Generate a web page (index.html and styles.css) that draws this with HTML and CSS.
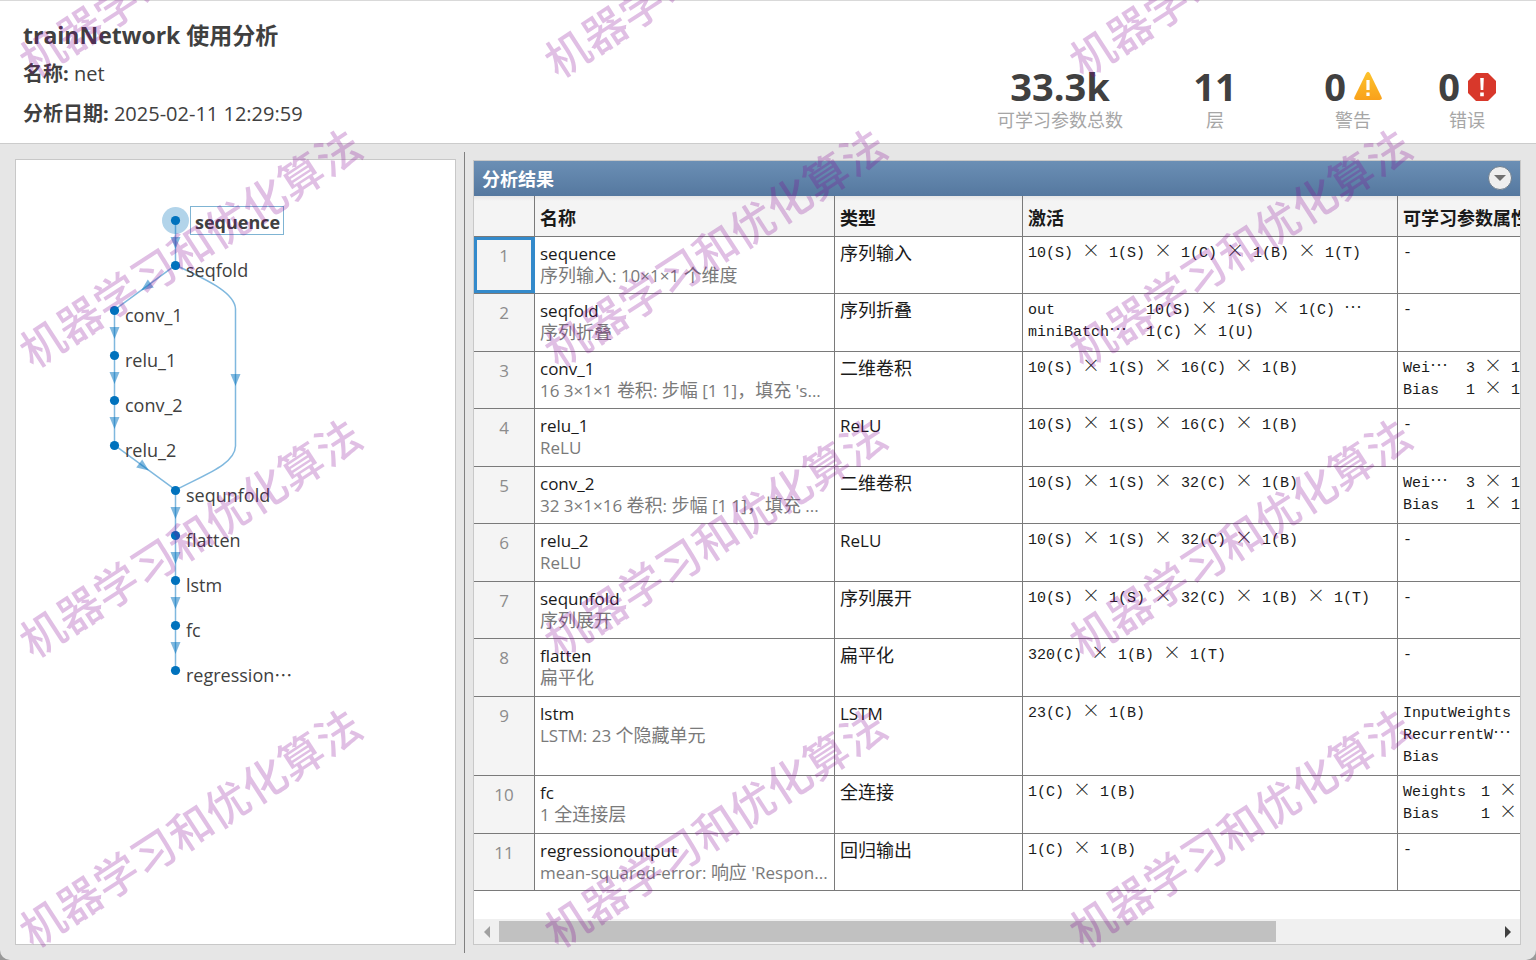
FILE: index.html
```html
<!DOCTYPE html>
<html lang="zh-CN">
<head>
    <meta charset="UTF-8">
    <meta name="viewport" content="width=device-width, initial-scale=1.0">
    <title>trainNetwork 使用分析</title>
    <link rel="stylesheet" href="styles.css">
</head>
<body>
    <div class="app">
        <header class="header">
            <div class="info">
                <h1>trainNetwork 使用分析</h1>
                <p><b>名称:</b> net</p>
                <p><b>分析日期:</b> 2025-02-11 12:29:59</p>
            </div>
            <div class="stats">
                <div class="stat total">
                    <strong>33.3k</strong>
                    <span>可学习参数总数</span>
                </div>
                <div class="stat layers">
                    <strong>11</strong>
                    <span>层</span>
                </div>
                <div class="stat">
                    <strong>0
                        <svg width="28" height="30" viewBox="0 0 28 30">
                            <defs>
                                <linearGradient id="warn" x1="0" y1="0" x2="0" y2="1">
                                    <stop offset="0" stop-color="#fcc32c"/>
                                    <stop offset="1" stop-color="#f9a11b"/>
                                </linearGradient>
                            </defs>
                            <path d="M12 2.5Q14 -1 16 2.5L27.5 26Q28.5 29 25.5 29H2.5Q-.5 29 .5 26Z" fill="url(#warn)"/>
                            <path d="M12.4 9h3.2v10h-3.2zM12.4 21.5h3.2v3.5h-3.2z" fill="#fff"/>
                        </svg>
                    </strong>
                    <span>警告</span>
                </div>
                <div class="stat">
                    <strong>0
                        <svg width="28" height="30" viewBox="0 0 28 30">
                            <path d="M8 2H20L28 10V22L20 30H8L0 22V10Z" fill="#d8382b"/>
                            <path d="M12.2 7h3.6l-.5 12h-2.6zM12.2 21.5h3.6v3.8h-3.6z" fill="#fff"/>
                        </svg>
                    </strong>
                    <span>错误</span>
                </div>
            </div>
        </header>

        <main class="main">
            <section class="graph">
                <svg width="439" height="540" viewBox="0 0 439 540">
                    <defs>
                        <path id="arrow" d="M-5 -6H5L0 6Z"/>
                        <circle id="node" r="4.6"/>
                    </defs>
                    <circle class="halo" cx="159.500" cy="60.500" r="13.5"/>
                    <g class="edges">
                        <path d="M159.500 60V105L98.500 150V285L159.500 330V510"/>
                        <path d="M159.500 105C184 117 219 131 219.500 149V286C219 304 190 314 159.500 330"/>
                    </g>
                    <g class="arrows">
                        <use href="#arrow" x="159.500" y="83"/>
                        <use href="#arrow" transform="translate(130 127) rotate(53)"/>
                        <use href="#arrow" x="98.500" y="173"/>
                        <use href="#arrow" x="98.500" y="218"/>
                        <use href="#arrow" x="98.500" y="263"/>
                        <use href="#arrow" transform="translate(128 307) rotate(-53)"/>
                        <use href="#arrow" x="219.500" y="220"/>
                        <use href="#arrow" x="159.500" y="353"/>
                        <use href="#arrow" x="159.500" y="398"/>
                        <use href="#arrow" x="159.500" y="443"/>
                        <use href="#arrow" x="159.500" y="488"/>
                    </g>
                    <g class="nodes">
                        <use href="#node" x="159.500" y="60.500"/>
                        <use href="#node" x="159.500" y="105.500"/>
                        <use href="#node" x="98.500" y="150.500"/>
                        <use href="#node" x="98.500" y="195.500"/>
                        <use href="#node" x="98.500" y="240.500"/>
                        <use href="#node" x="98.500" y="285.500"/>
                        <use href="#node" x="159.500" y="330.500"/>
                        <use href="#node" x="159.500" y="375.500"/>
                        <use href="#node" x="159.500" y="420.500"/>
                        <use href="#node" x="159.500" y="465.500"/>
                        <use href="#node" x="159.500" y="510.500"/>
                    </g>
                    <rect class="label-box" x="174.500" y="46.500" width="93" height="28"/>
                    <g class="labels">
                        <text class="selected" x="179" y="69">sequence</text>
                        <text x="170" y="117">seqfold</text>
                        <text x="109" y="162">conv_1</text>
                        <text x="109" y="207">relu_1</text>
                        <text x="109" y="252">conv_2</text>
                        <text x="109" y="297">relu_2</text>
                        <text x="170" y="342">sequnfold</text>
                        <text x="170" y="387">flatten</text>
                        <text x="170" y="432">lstm</text>
                        <text x="170" y="477">fc</text>
                        <text x="170" y="522">regression<tspan class="dots">⋯</tspan></text>
                    </g>
                </svg>
            </section>

            <div class="divider"></div>

            <section class="results">
                <div class="results-title">
                    <h2>分析结果</h2>
                    <button type="button" class="toggle" aria-label="菜单"></button>
                </div>
                <div class="table-wrap">
                    <table>
                        <colgroup>
                            <col class="col-num">
                            <col class="col-name">
                            <col class="col-type">
                            <col class="col-act">
                            <col class="col-props">
                        </colgroup>
                        <thead>
                            <tr><th></th><th>名称</th><th>类型</th><th>激活</th><th>可学习参数属性</th></tr>
                        </thead>
                        <tbody>
                            <tr>
                                <td class="num active">1</td>
                                <td>sequence<small><span class="zh">序列输入</span>: 10×1×1 <span class="zh">个维度</span></small></td>
                                <td><span class="zh">序列输入</span></td>
                                <td class="mono">10(S) <i>×</i> 1(S) <i>×</i> 1(C) <i>×</i> 1(B) <i>×</i> 1(T)</td>
                                <td class="mono">-</td>
                            </tr>
                            <tr>
                                <td class="num">2</td>
                                <td>seqfold<small><span class="zh">序列折叠</span></small></td>
                                <td><span class="zh">序列折叠</span></td>
                                <td class="mono">
                                    <div class="pair outputs"><span>out</span><span>10(S) <i>×</i> 1(S) <i>×</i> 1(C) <i>⋯</i></span></div>
                                    <div class="pair outputs"><span>miniBatch<i>⋯</i></span><span>1(C) <i>×</i> 1(U)</span></div>
                                </td>
                                <td class="mono">-</td>
                            </tr>
                            <tr>
                                <td class="num">3</td>
                                <td>conv_1<small>16 3×1×1 <span class="zh">卷积</span>: <span class="zh">步幅</span> [1 1]<span class="zh">，填充</span> 's...</small></td>
                                <td><span class="zh">二维卷积</span></td>
                                <td class="mono">10(S) <i>×</i> 1(S) <i>×</i> 16(C) <i>×</i> 1(B)</td>
                                <td class="mono">
                                    <div class="pair conv"><span>Wei<i>⋯</i></span><span>3 <i>×</i> 1</span></div>
                                    <div class="pair conv"><span>Bias</span><span>1 <i>×</i> 1</span></div>
                                </td>
                            </tr>
                            <tr>
                                <td class="num">4</td>
                                <td>relu_1<small>ReLU</small></td>
                                <td>ReLU</td>
                                <td class="mono">10(S) <i>×</i> 1(S) <i>×</i> 16(C) <i>×</i> 1(B)</td>
                                <td class="mono">-</td>
                            </tr>
                            <tr>
                                <td class="num">5</td>
                                <td>conv_2<small>32 3×1×16 <span class="zh">卷积</span>: <span class="zh">步幅</span> [1 1]<span class="zh">，填充</span> ...</small></td>
                                <td><span class="zh">二维卷积</span></td>
                                <td class="mono">10(S) <i>×</i> 1(S) <i>×</i> 32(C) <i>×</i> 1(B)</td>
                                <td class="mono">
                                    <div class="pair conv"><span>Wei<i>⋯</i></span><span>3 <i>×</i> 1</span></div>
                                    <div class="pair conv"><span>Bias</span><span>1 <i>×</i> 1</span></div>
                                </td>
                            </tr>
                            <tr>
                                <td class="num">6</td>
                                <td>relu_2<small>ReLU</small></td>
                                <td>ReLU</td>
                                <td class="mono">10(S) <i>×</i> 1(S) <i>×</i> 32(C) <i>×</i> 1(B)</td>
                                <td class="mono">-</td>
                            </tr>
                            <tr>
                                <td class="num">7</td>
                                <td>sequnfold<small><span class="zh">序列展开</span></small></td>
                                <td><span class="zh">序列展开</span></td>
                                <td class="mono">10(S) <i>×</i> 1(S) <i>×</i> 32(C) <i>×</i> 1(B) <i>×</i> 1(T)</td>
                                <td class="mono">-</td>
                            </tr>
                            <tr>
                                <td class="num">8</td>
                                <td>flatten<small><span class="zh">扁平化</span></small></td>
                                <td><span class="zh">扁平化</span></td>
                                <td class="mono">320(C) <i>×</i> 1(B) <i>×</i> 1(T)</td>
                                <td class="mono">-</td>
                            </tr>
                            <tr>
                                <td class="num">9</td>
                                <td>lstm<small>LSTM: 23 <span class="zh">个隐藏单元</span></small></td>
                                <td>LSTM</td>
                                <td class="mono">23(C) <i>×</i> 1(B)</td>
                                <td class="mono">
                                    <div class="pair"><span>InputWeights</span></div>
                                    <div class="pair"><span>RecurrentW<i>⋯</i></span></div>
                                    <div class="pair"><span>Bias</span></div>
                                </td>
                            </tr>
                            <tr>
                                <td class="num">10</td>
                                <td>fc<small>1 <span class="zh">全连接层</span></small></td>
                                <td><span class="zh">全连接</span></td>
                                <td class="mono">1(C) <i>×</i> 1(B)</td>
                                <td class="mono">
                                    <div class="pair dense"><span>Weights</span><span>1 <i>×</i></span></div>
                                    <div class="pair dense"><span>Bias</span><span>1 <i>×</i></span></div>
                                </td>
                            </tr>
                            <tr>
                                <td class="num">11</td>
                                <td>regressionoutput<small>mean-squared-error: <span class="zh">响应</span> 'Respon...</small></td>
                                <td><span class="zh">回归输出</span></td>
                                <td class="mono">1(C) <i>×</i> 1(B)</td>
                                <td class="mono">-</td>
                            </tr>
                        </tbody>
                    </table>
                </div>
                <div class="scrollbar">
                    <button type="button" class="scroll-left" aria-label="向左滚动"></button>
                    <div class="track"><div class="thumb"></div></div>
                    <button type="button" class="scroll-right" aria-label="向右滚动"></button>
                </div>
            </section>
        </main>
    </div>

    <div class="watermark">
        <div class="marks">
            <span>机器学习和优化算法</span><span>机器学习和优化算法</span><span>机器学习和优化算法</span>
            <span>机器学习和优化算法</span><span>机器学习和优化算法</span><span>机器学习和优化算法</span>
            <span>机器学习和优化算法</span><span>机器学习和优化算法</span><span>机器学习和优化算法</span>
            <span>机器学习和优化算法</span><span>机器学习和优化算法</span><span>机器学习和优化算法</span>
        </div>
    </div>
</body>
</html>
```
FILE: styles.css
```css
* {
    box-sizing: border-box;
}
body {
    margin: 0;
    background-color: #999;
    font-family: "Open Sans", "Noto Sans CJK SC", sans-serif;
    font-size: 17px;
    color: #404040;
}
.app {
    display: flex;
    flex-direction: column;
    min-height: 100vh;
    background-color: #e6e6e6;
    border-radius: 0 0 10px 10px;
    overflow: hidden;
}

/* header */
.header {
    display: flex;
    justify-content: space-between;
    align-items: flex-end;
    padding: 18px 12px 9px 23px;
    background-color: #fff;
    border-top: 1px solid #d9d9d9;
    border-bottom: 1px solid #ccc;
}
h1 {
    margin: 0 0 3px;
    font-size: 23px;
    line-height: 32px;
}
.info p {
    margin: 0;
    font-size: 20px;
    line-height: 40px;
}
.stats {
    display: flex;
}
.stat {
    display: flex;
    flex-direction: column;
    align-items: center;
    min-width: 114px;
}
.stat.total {
    margin-right: 35px;
}
.stat.layers {
    margin-right: 24px;
}
.stat strong {
    display: flex;
    align-items: center;
    gap: 8px;
    font-size: 38px;
    line-height: 40px;
}
.stat span {
    font-size: 18px;
    line-height: 28px;
    color: #a6a6a6;
}

/* panes */
.main {
    display: flex;
    flex: 1;
    padding: 8px 15px 7px;
}
.graph {
    flex: 0 0 441px;
    margin: 7px 0 8px;
    background-color: #fff;
    border: 1px solid #c8c8c8;
}
.graph svg {
    display: block;
}
.halo {
    fill: #b2d4ea;
}
.edges {
    fill: none;
    stroke: #0072bd;
    stroke-opacity: 0.5;
    stroke-width: 1.5;
}
.arrows {
    fill: #0072bd;
    fill-opacity: 0.5;
}
.nodes {
    fill: #0072bd;
}
.label-box {
    fill: #fff;
    stroke: #7fb4d3;
}
.labels {
    font-size: 18px;
    fill: #404040;
}
.labels .selected {
    font-weight: bold;
}
.labels .dots {
    font-family: "Noto Sans CJK SC", sans-serif;
}
.divider {
    width: 1px;
    margin: 0 8px;
    background-color: #808080;
}
.results {
    display: flex;
    flex-direction: column;
    flex: 1;
    min-width: 0;
    margin: 8px 0;
    background-color: #fff;
    border: 1px solid #c8c8c8;
}
.results-title {
    display: flex;
    justify-content: space-between;
    align-items: center;
    height: 35px;
    padding: 0 8px 2px;
    background: linear-gradient(#6b8fb5, #55789f);
}
h2 {
    margin: 0;
    font-size: 18px;
    color: #fff;
}
.toggle {
    display: flex;
    align-items: center;
    justify-content: center;
    width: 24px;
    height: 24px;
    padding: 0;
    border: 1px solid #6d7d8d;
    border-radius: 50%;
    background-color: #eee;
}
.toggle::before {
    content: "";
    border: 6px solid transparent;
    border-top-color: #707070;
    border-bottom: 0;
}

/* table */
.table-wrap {
    flex: 1;
    overflow: hidden;
}
table {
    width: 1344px;
    table-layout: fixed;
    border-collapse: separate;
    border-spacing: 0;
    color: #1a1a1a;
}
.col-num {
    width: 61px;
}
.col-name {
    width: 300px;
}
.col-type {
    width: 188px;
}
.col-act {
    width: 375px;
}
th {
    height: 41px;
    padding: 3px 5px 0;
    background: linear-gradient(#e6e6e6, #f4f4f4 5px);
    border-right: 1px solid #7a7a7a;
    border-bottom: 1px solid #7a7a7a;
    font-size: 18px;
    line-height: 24px;
    text-align: left;
}
td {
    height: 57px;
    padding: 6px 5px;
    border-right: 1px solid #7a7a7a;
    border-bottom: 1px solid #7a7a7a;
    line-height: 22px;
    vertical-align: top;
    white-space: nowrap;
}
tr:nth-child(even) td {
    height: 58px;
}
td small {
    display: block;
    font-size: 17px;
    color: #7a7a7a;
}
.zh {
    font-size: 18px;
    line-height: 20px;
}
.num {
    padding-top: 8px;
    background-color: #f4f4f4;
    color: #8c8c8c;
    text-align: center;
}
.num.active {
    border-right-color: #338acb;
    box-shadow: inset 0 0 0 3px #338acb;
}
.mono {
    font-family: "Liberation Mono", "Noto Sans CJK SC", monospace;
    font-size: 15px;
}
/* full-width signs take two columns of the mono text */
.mono i {
    display: inline-block;
    width: 18px;
    font-family: "Noto Sans CJK SC", sans-serif;
    font-size: 18px;
    font-style: normal;
    font-weight: 300;
    line-height: 0;
    text-align: center;
}
.pair {
    display: grid;
    height: 22px;
}
.pair.outputs {
    grid-template-columns: 118px auto;
}
.pair.conv {
    grid-template-columns: 63px auto;
}
.pair.dense {
    grid-template-columns: 78px auto;
}

/* horizontal scrollbar */
.scrollbar {
    display: flex;
    height: 25px;
    background-color: #f0f0f0;
}
.scrollbar button {
    display: flex;
    align-items: center;
    justify-content: center;
    width: 25px;
    padding: 0;
    border: 0;
    background: none;
}
.scrollbar button::before {
    content: "";
    border: 6px solid transparent;
}
.scrollbar .scroll-left::before {
    border-right-color: #a0a0a0;
    border-left: 0;
}
.scrollbar .scroll-right::before {
    border-left-color: #404040;
    border-right: 0;
}
.track {
    flex: 1;
    padding: 2px 0;
}
.thumb {
    width: 78%;
    height: 100%;
    background-color: #c1c1c1;
}

/* watermark lies over the whole page */
.watermark {
    position: fixed;
    inset: 0;
    overflow: hidden;
    pointer-events: none;
}
.marks {
    display: grid;
    grid-template-columns: repeat(3, 525px);
    grid-auto-rows: 290px;
    place-items: center;
    margin: -189px 0 0 -74px;
}
.marks span {
    font-family: "Noto Sans CJK SC", sans-serif;
    font-size: 44px;
    font-weight: 500;
    line-height: 1;
    white-space: nowrap;
    color: rgba(130, 0, 146, 0.25);
    transform: rotate(-33deg);
}
```
